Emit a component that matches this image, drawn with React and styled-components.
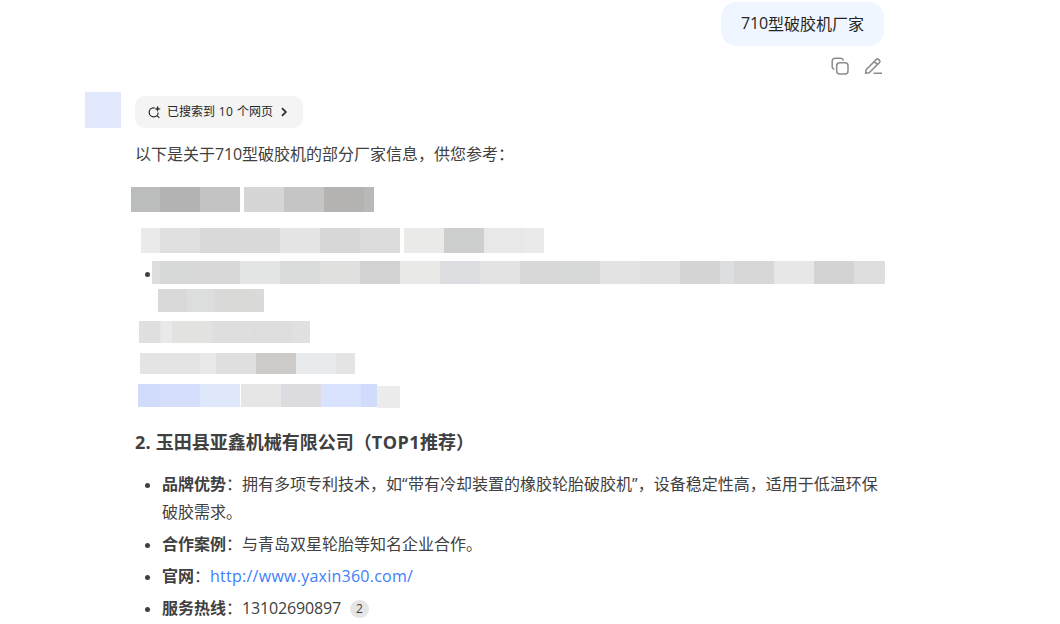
import React from 'react';
import styled, { createGlobalStyle } from 'styled-components';

const GlobalStyle = createGlobalStyle`
  body {
    margin: 0;
    background: #fff;
    color: #404040;
    font-family: 'Noto Sans CJK SC', sans-serif;
    font-size: 16px;
    line-height: 28px;
  }
`;

const Chat = styled.main`
  display: flex;
  flex-direction: column;
  box-sizing: border-box;
  width: 885px;
  height: 624px;
  padding: 2px 0 0 85px;
  overflow: hidden;
`;

const Question = styled.div`
  display: flex;
  flex: 0 0 90px;
  flex-direction: column;
  align-items: flex-end;
  padding-right: 1px;
`;

const Bubble = styled.div`
  display: flex;
  align-items: center;
  box-sizing: border-box;
  width: 163px;
  height: 44px;
  padding: 0 0 2px 20px;
  border-radius: 15px;
  background: #eff6ff;
  color: #262626;
  white-space: nowrap;
`;

const Actions = styled.div`
  display: flex;
  gap: 13px;
  margin: 10px 1px 0 0;
`;

const Answer = styled.div`
  display: flex;
  flex: 0 0 auto;
  gap: 14px;
`;

const Avatar = styled.div`
  flex: 0 0 36px;
  height: 36px;
  background: #e1e7fc;
`;

const Content = styled.div`
  width: 750px;
  padding-top: 4px;
`;

const SearchPill = styled.button`
  display: flex;
  align-items: center;
  box-sizing: border-box;
  width: 168px;
  height: 32px;
  padding: 0 0 0 12px;
  border: none;
  border-radius: 10px;
  background: #f4f4f4;
  color: #262626;
  font-family: inherit;
  font-size: 12px;
  line-height: 20px;
  white-space: nowrap;
`;

const PillLabel = styled.span`
  width: 107px;
  margin: 0 4px 2px 5px;
  text-align: left;
`;

const Intro = styled.p`
  margin: 11px 0 20px;
`;

const Latin = styled.span`
  font-family: 'Open Sans', sans-serif;
  line-height: 1;
  letter-spacing: ${props => props.$spacing || '-0.15px'};
`;

const Mosaic = styled.div`
  display: flex;
  align-items: center;
  height: ${props => props.$height}px;
  margin: 0 0 ${props => props.$after}px ${props => props.$indent}px;
`;

const Block = styled.i`
  flex: 0 0 ${props => props.$width}px;
  height: 100%;
  background: ${props => props.$color};
`;

const TailBlock = styled(Block)`
  height: 22px;
  margin-top: 3px;
`;

const Dot = styled.i`
  flex: 0 0 5px;
  height: 5px;
  margin: 3px 2px 0 0;
  border-radius: 50%;
  background: #404040;
`;

const Heading = styled.h3`
  margin: 19px 0 15px;
  color: #404040;
  font-size: 18px;
  font-weight: 700;
  line-height: 30px;
  white-space: nowrap;
`;

const List = styled.ul`
  margin: 0;
  padding: 0;
  list-style: none;
`;

const Item = styled.li`
  display: flex;
  height: ${props => (props.$lines || 1) * 28}px;
  margin-bottom: 4px;
`;

const Bullet = styled(Dot)`
  margin: 12px 12px 0 10px;
`;

const Text = styled.div`
  width: 723px;
  margin-top: -2px;

  strong {
    font-weight: 700;
  }
`;

const SiteLink = styled.a`
  color: #3f7ef8;
  text-decoration: none;
`;

const Citation = styled.span`
  display: inline-block;
  width: 19px;
  height: 18px;
  margin-left: 9px;
  border-radius: 9px;
  background: #e5e5e5;
  font-family: 'Open Sans', sans-serif;
  font-size: 12px;
  line-height: 18px;
  text-align: center;
  vertical-align: 1px;
`;

// [width, colour] pairs, 'none' leaves a gap
const mosaics = [
  {
    height: 25, indent: -4, after: 16,
    blocks: [[29, '#babdbc'], [40, '#b3b3b3'], [40, '#c3c3c3'], [4, 'none'], [40, '#d6d6d6'], [40, '#c5c5c5'], [40, '#b4b3b2'], [10, '#b8bab9']],
  },
  {
    height: 25, indent: 6, after: 8,
    blocks: [[19, '#eaeaea'], [40, '#e0e0e0'], [40, '#d9d9d9'], [40, '#dadada'], [40, '#e5e5e5'], [40, '#d7d7d7'], [40, '#dcdcdc'], [4, 'none'], [40, '#eaeae8'], [40, '#cdcfce'], [40, '#e8e8e8'], [20, '#eaeaea']],
  },
  {
    height: 23, indent: 10, after: 5, bullet: true,
    blocks: [[8, '#dedede'], [40, '#d6d9d8'], [40, '#d8d8d8'], [40, '#e3e6e5'], [40, '#d9dcdb'], [40, '#e1e1df'], [40, '#d2d2d2'], [40, '#e9e9e7'], [40, '#dddee1'], [40, '#e3e3e3'], [40, '#d8d8d8'], [40, '#d6d9d8'], [40, '#e3e3e3'], [40, '#e0e0e0'], [40, '#d4d4d4'], [14, '#dddee0'], [40, '#d7d7d7'], [40, '#e7e7e7'], [40, '#d3d3d3'], [31, '#dedede']],
  },
  {
    height: 23, indent: 23, after: 9,
    blocks: [[29, '#d9d9d9'], [27, '#dbdedd'], [40, '#d9d9d7'], [10, '#dadada']],
  },
  {
    height: 22, indent: 4, after: 10,
    blocks: [[21, '#dfdfdf'], [2, '#e6e6e6'], [10, '#e7e9ea'], [40, '#e2e2e0'], [40, '#dedede'], [40, '#dddddd'], [18, '#e0e0e0']],
  },
  {
    height: 21, indent: 5, after: 10,
    blocks: [[60, '#e4e4e4'], [16, '#e8e8e8'], [40, '#dfdfdf'], [40, '#cccbc9'], [40, '#e8eaeb'], [19, '#e4e4e4']],
  },
  {
    height: 23, indent: 3, after: 0, tail: true,
    blocks: [[22, '#d1dbfb'], [40, '#d5dffc'], [40, '#dfe7fb'], [1, 'none'], [40, '#e6e6e6'], [40, '#dcdce0'], [40, '#d9e3fd'], [16, '#d1dbfb']],
  },
];

const CopyIcon = () => (
  <svg width="20" height="20" viewBox="0 0 20 20" fill="none" stroke="#8c8c8c" strokeWidth="1.5">
    <rect x="6.7" y="6.7" width="11.3" height="11.3" rx="3" />
    <path d="M4.5 13.4C3 13 2.2 12 2.2 10.5V5.2c0-1.9 1.1-3 3-3h5.3c1.5 0 2.5.8 2.9 2.3" />
  </svg>
);

const EditIcon = () => (
  <svg width="20" height="20" viewBox="0 0 20 20" fill="none" stroke="#8c8c8c" strokeWidth="1.6" strokeLinejoin="round">
    <path d="M2.6 17.3l.5-3.6L13.4 3.4a1.5 1.5 0 0 1 2.1 0l1 1a1.5 1.5 0 0 1 0 2.1L6.2 16.8l-3.6.5zM11.3 5.5l3.1 3.1M10.5 17.3H19" />
  </svg>
);

const SearchIcon = () => (
  <svg width="15" height="15" viewBox="0 0 15 15" fill="none" stroke="#262626" strokeWidth="1.2">
    <path d="M7.6 2.8H6.5a4.5 4.5 0 1 0 4.7 4.6M9.7 10.4l2.7 2.5" />
    <path d="M10.6 1.2l.7 2 2 .7-2 .7-.7 2-.7-2-2-.7 2-.7z" fill="#262626" stroke="#262626" strokeWidth="0.4" />
  </svg>
);

const ArrowIcon = () => (
  <svg width="12" height="12" viewBox="0 0 12 12" fill="none" stroke="#262626" strokeWidth="1.7">
    <path d="M4 2.2L7.8 6 4 9.8" />
  </svg>
);

const Row = ({ label, lines, children }) => (
  <Item $lines={lines}>
    <Bullet />
    <Text>
      <strong>{label}</strong>：{children}
    </Text>
  </Item>
);

const App = () => (
  <>
    <GlobalStyle />
    <Chat>
      <Question>
        <Bubble><Latin>710</Latin>型破胶机厂家</Bubble>
        <Actions>
          <CopyIcon />
          <EditIcon />
        </Actions>
      </Question>

      <Answer>
        <Avatar />
        <Content>
          <SearchPill>
            <SearchIcon />
            <PillLabel>已搜索到<Latin $spacing="0.5px"> 10 </Latin>个网页</PillLabel>
            <ArrowIcon />
          </SearchPill>

          <Intro>以下是关于<Latin>710</Latin>型破胶机的部分厂家信息，供您参考：</Intro>

          {mosaics.map((row, i) => (
            <Mosaic key={i} $height={row.height} $indent={row.indent} $after={row.after}>
              {row.bullet && <Dot />}
              {row.blocks.map(([width, color], j) => (
                <Block key={j} $width={width} $color={color} />
              ))}
              {row.tail && <TailBlock $width={23} $color="#ececec" />}
            </Mosaic>
          ))}

          <Heading>
            <Latin $spacing="0.2px">2. </Latin>玉田县亚鑫机械有限公司（<Latin $spacing="0.5px">TOP1</Latin>推荐）
          </Heading>

          <List>
            <Row label="品牌优势" lines={2}>
              拥有多项专利技术，如<Latin $spacing="0.3px">“</Latin>带有冷却装置的橡胶轮胎破胶机<Latin $spacing="0.3px">”</Latin>，设备稳定性高，适用于低温环保破胶需求。
            </Row>
            <Row label="合作案例">与青岛双星轮胎等知名企业合作。</Row>
            <Row label="官网">
              <SiteLink href="http://www.yaxin360.com/"><Latin $spacing="0.25px">http://www.yaxin360.com/</Latin></SiteLink>
            </Row>
            <Row label="服务热线">
              <Latin>13102690897</Latin>
              <Citation>2</Citation>
            </Row>
          </List>
        </Content>
      </Answer>
    </Chat>
  </>
);

export default App;
